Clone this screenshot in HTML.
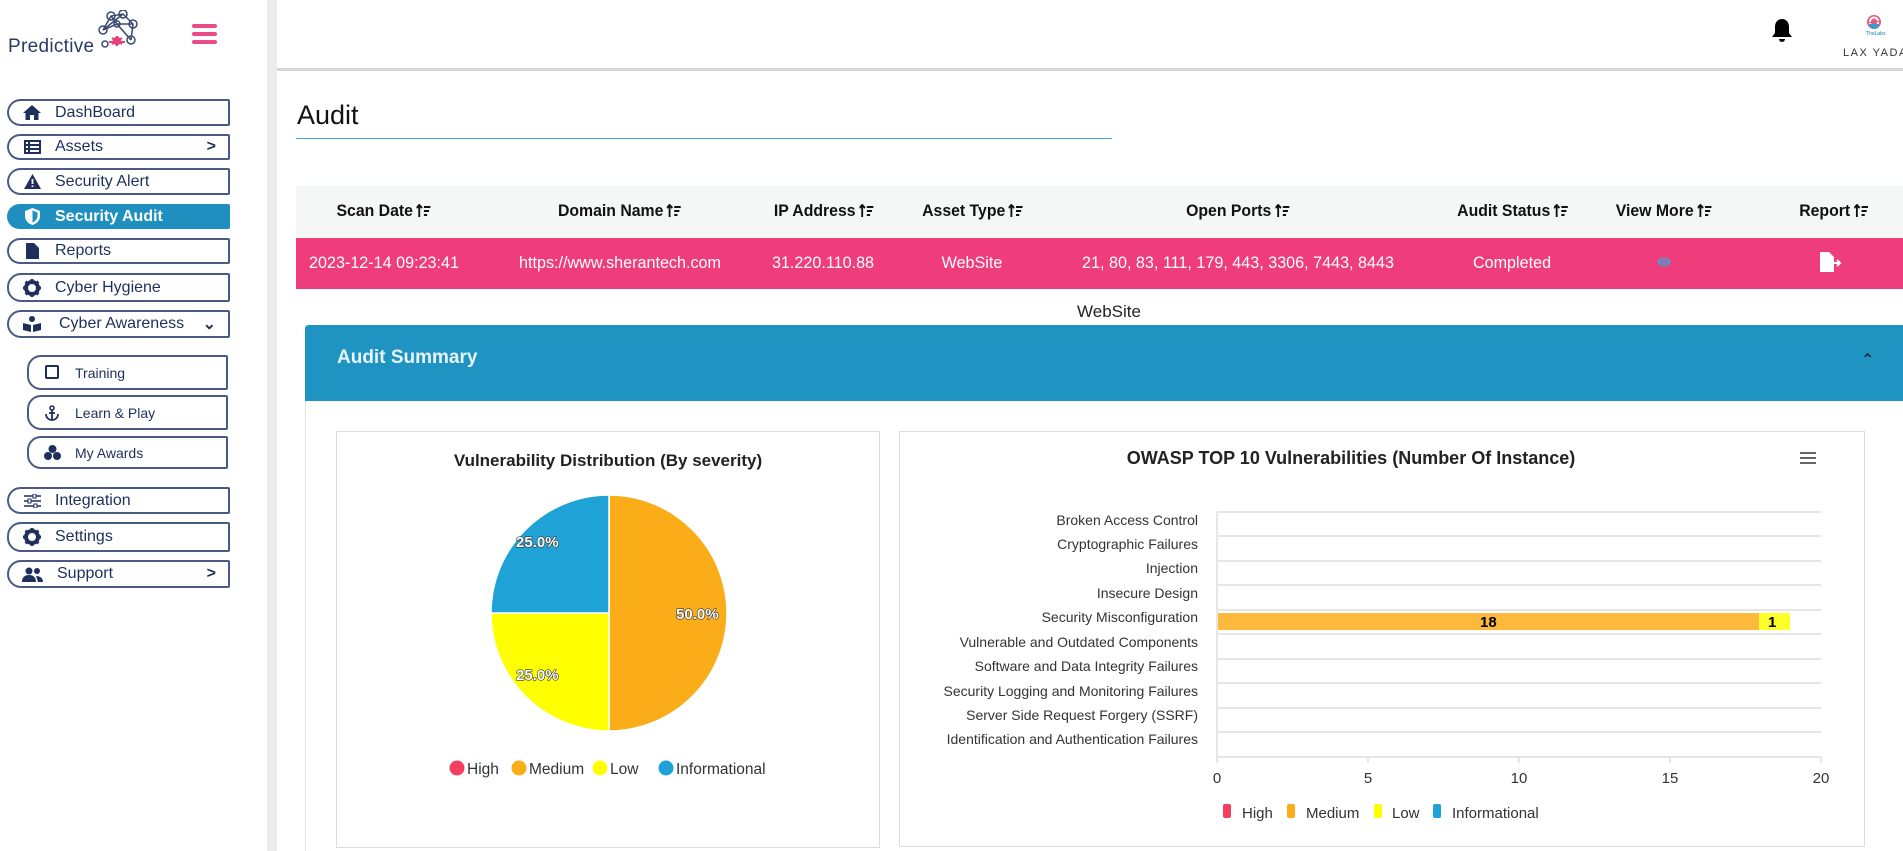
<!DOCTYPE html>
<html><head><meta charset="utf-8">
<style>
*{margin:0;padding:0;box-sizing:border-box}
body{width:1903px;height:851px;overflow:hidden;background:#fff;font-family:"Liberation Sans",Arial,sans-serif;position:relative}
.a{position:absolute}
.nav{position:absolute;left:7px;width:223px;border:2px solid #4a5a85;border-radius:14px 2px 2px 14px;color:#1f2f5c;font-size:16px;display:flex;align-items:center;background:#fff}
.nav .ic{width:46px;display:flex;justify-content:center;align-items:center}
.nav.sub{left:27px;width:201px;font-size:14px}
.nav.act{background:#1e8fbf;border-color:#1e8fbf;color:#fff;font-weight:bold}
.nav .chev{position:absolute;right:12px;font-size:16px;font-weight:bold}
.th{position:absolute;top:201px;font-weight:bold;font-size:17px;color:#111;transform:translateX(-50%) scaleX(0.93);white-space:nowrap;display:flex;align-items:center;gap:4px}
.td{position:absolute;top:253px;font-size:17px;color:#fff;transform:translateX(-50%) scaleX(0.95);white-space:nowrap}
</style></head><body>
<svg width="0" height="0" style="position:absolute"><defs><g id="srt"><path d="M3 1v12M0 4l3-3 3 3" stroke="#111" stroke-width="2" fill="none"/><path d="M8 3h7M8 7h5.5M8 11h3.5" stroke="#111" stroke-width="2"/></g></defs></svg>
<!-- sidebar -->
<div class="a" style="left:267px;top:0;width:10px;height:851px;background:#ececec"></div>
<div class="a" style="left:277px;top:68px;width:1626px;height:3px;background:#d6d6d6"></div>
<div class="a" style="left:8px;top:36px;font-size:19px;color:#2a3a6a;letter-spacing:0.3px">Predictive</div>
<svg class="a" style="left:93px;top:10px" width="46" height="40" viewBox="0 0 46 40" fill="none" stroke="#3a4a70" stroke-width="1.5">
<circle cx="10" cy="20" r="4"/><circle cx="18" cy="6" r="4"/><circle cx="30" cy="4" r="4"/><circle cx="40" cy="14" r="4"/><circle cx="38" cy="30" r="4"/><circle cx="12" cy="34" r="3"/><circle cx="24" cy="14" r="3"/>
<path d="M10 20L18 6L30 4L40 14L38 30M10 20L24 14L40 14M18 6L24 14L38 30M10 20L30 4"/>
<path d="M16 32h16M24 26v10M19 28l10 6M29 28l-10 6" stroke="#e8407a" stroke-width="2"/><circle cx="24" cy="31" r="3.5" fill="#e8407a" stroke="#e8407a"/>
</svg>
<div class="a" style="left:192px;top:24px;width:25px;height:4px;background:#ea4c89;border-radius:2px"></div>
<div class="a" style="left:192px;top:32px;width:25px;height:4px;background:#ea4c89;border-radius:2px"></div>
<div class="a" style="left:192px;top:40px;width:25px;height:4px;background:#ea4c89;border-radius:2px"></div>

<div class="nav" style="top:99px;height:27px"><span class="ic"><svg width="18" height="15" viewBox="0 0 18 15"><path d="M9 0L0 8h2.5v7h4.5v-5h4v5h4.5V8H18z" fill="#1f2f5c"/></svg></span>DashBoard</div>
<div class="nav" style="top:134px;height:26px"><span class="ic"><svg width="17" height="14"><rect x="1" y="1" width="15" height="12" fill="none" stroke="#1f2f5c" stroke-width="2"/><path d="M1 5h15M1 9h15M5 1v12" stroke="#1f2f5c" stroke-width="2"/></svg></span>Assets<span class="chev">&gt;</span></div>
<div class="nav" style="top:168px;height:27px"><span class="ic"><svg width="17" height="15"><path d="M8.5 0L17 15H0z" fill="#1f2f5c"/><path d="M8.5 5v5M8.5 11.5v1.5" stroke="#fff" stroke-width="1.8"/></svg></span>Security Alert</div>
<div class="nav act" style="top:204px;height:25px"><span class="ic"><svg width="15" height="17"><path d="M7.5 0L15 3v5c0 5-4 8-7.5 9C4 16 0 13 0 8V3z" fill="#fff"/><path d="M7.5 2.5v12C10 13.5 12.5 11 12.5 8V4.5z" fill="#1e8fbf"/></svg></span>Security Audit</div>
<div class="nav" style="top:238px;height:26px"><span class="ic"><svg width="13" height="16"><path d="M0 0h8l5 5v11H0z" fill="#1f2f5c"/></svg></span>Reports</div>
<div class="nav" style="top:273px;height:29px"><span class="ic"><svg width="18" height="18" viewBox="0 0 18 18"><circle cx="9" cy="9" r="6" fill="none" stroke="#1f2f5c" stroke-width="4"/><path d="M9 0v4M9 14v4M0 9h4M14 9h4M2.6 2.6l2.8 2.8M12.6 12.6l2.8 2.8M2.6 15.4l2.8-2.8M12.6 5.4l2.8-2.8" stroke="#1f2f5c" stroke-width="3"/></svg></span>Cyber Hygiene</div>
<div class="nav" style="top:310px;height:28px"><span class="ic"><svg width="18" height="16"><circle cx="9" cy="3" r="3" fill="#1f2f5c"/><path d="M0 7l8 2v7L0 14zM18 7l-8 2v7l8-2z" fill="#1f2f5c"/></svg></span><span style="margin-left:4px">Cyber Awareness</span><span class="chev">&#8964;</span></div>
<div class="nav sub" style="top:355px;height:35px"><span class="ic"><svg width="14" height="15"><rect x="1" y="1" width="12" height="12" rx="1" fill="none" stroke="#1f2f5c" stroke-width="2"/></svg></span>Training</div>
<div class="nav sub" style="top:395px;height:35px"><span class="ic"><svg width="16" height="16"><circle cx="8" cy="3" r="2" fill="none" stroke="#1f2f5c" stroke-width="1.6"/><path d="M8 5v10M2 9c0 4 3 6 6 6s6-2 6-6M5 8h6" fill="none" stroke="#1f2f5c" stroke-width="1.8"/></svg></span>Learn &amp; Play</div>
<div class="nav sub" style="top:436px;height:33px"><span class="ic"><svg width="17" height="15"><circle cx="8.5" cy="4" r="4" fill="#1f2f5c"/><circle cx="4" cy="11" r="4" fill="#1f2f5c"/><circle cx="13" cy="11" r="4" fill="#1f2f5c"/></svg></span>My Awards</div>
<div class="nav" style="top:487px;height:27px"><span class="ic"><svg width="17" height="14"><path d="M0 2h17M0 7h17M0 12h17" stroke="#1f2f5c" stroke-width="1.6"/><rect x="9" y="0" width="3" height="4" fill="#fff" stroke="#1f2f5c"/><rect x="4" y="5" width="3" height="4" fill="#fff" stroke="#1f2f5c"/><rect x="10" y="10" width="3" height="4" fill="#fff" stroke="#1f2f5c"/></svg></span>Integration</div>
<div class="nav" style="top:522px;height:30px"><span class="ic"><svg width="18" height="18" viewBox="0 0 18 18"><circle cx="9" cy="9" r="6" fill="none" stroke="#1f2f5c" stroke-width="4"/><path d="M9 0v4M9 14v4M0 9h4M14 9h4M2.6 2.6l2.8 2.8M12.6 12.6l2.8 2.8M2.6 15.4l2.8-2.8M12.6 5.4l2.8-2.8" stroke="#1f2f5c" stroke-width="3"/></svg></span>Settings</div>
<div class="nav" style="top:560px;height:28px"><span class="ic"><svg width="21" height="15"><circle cx="7" cy="4" r="3.5" fill="#1f2f5c"/><circle cx="15" cy="4" r="3" fill="#1f2f5c"/><path d="M0 15c0-5 3-7 7-7s7 2 7 7zM14 9c4 0 7 2 7 6h-5z" fill="#1f2f5c"/></svg></span><span style="margin-left:2px">Support</span><span class="chev">&gt;</span></div>

<!-- top header -->
<svg class="a" style="left:1771px;top:18px" width="22" height="25" viewBox="0 0 22 25"><path d="M11 1c-4 0-7 3-7 8v6l-3 4h20l-3-4V9c0-5-3-8-7-8z" fill="#000"/><path d="M8 21a3 3 0 006 0z" fill="#000"/></svg>
<svg class="a" style="left:1866px;top:14px" width="16" height="16"><circle cx="8" cy="8" r="7" fill="#e85a7a"/><path d="M4 8a4 4 0 018-1M12 8a4 4 0 01-8 1" stroke="#fff" stroke-width="2" fill="none"/><path d="M3 10a5 5 0 0010 0" fill="#2ea0d8"/></svg>
<div class="a" style="left:1866px;top:31px;font-size:5px;color:#1a7ab0">TheLabs</div>
<div class="a" style="left:1843px;top:47px;font-size:11px;color:#333;letter-spacing:1.5px;white-space:nowrap">LAX YADAV</div>

<!-- title -->
<div class="a" style="left:297px;top:100px;font-size:27px;color:#111">Audit</div>
<div class="a" style="left:296px;top:138px;width:816px;height:1px;background:#3aa7d5"></div>

<!-- table -->
<div class="a" style="left:296px;top:186px;width:1607px;height:52px;background:#f5f7f7"></div>
<div class="a" style="left:296px;top:238px;width:1607px;height:51px;background:#ef3d7b"></div>
<div class="th" style="left:384px">Scan Date<svg width="16" height="14"><use href="#srt"/></svg></div>
<div class="th" style="left:620px">Domain Name<svg width="16" height="14"><use href="#srt"/></svg></div>
<div class="th" style="left:824px">IP Address<svg width="16" height="14"><use href="#srt"/></svg></div>
<div class="th" style="left:973px">Asset Type<svg width="16" height="14"><use href="#srt"/></svg></div>
<div class="th" style="left:1238px">Open Ports<svg width="16" height="14"><use href="#srt"/></svg></div>
<div class="th" style="left:1513px">Audit Status<svg width="16" height="14"><use href="#srt"/></svg></div>
<div class="th" style="left:1664px">View More<svg width="16" height="14"><use href="#srt"/></svg></div>
<div class="th" style="left:1834px">Report<svg width="16" height="14"><use href="#srt"/></svg></div>
<div class="td" style="left:384px">2023-12-14 09:23:41</div>
<div class="td" style="left:620px">https://www.sherantech.com</div>
<div class="td" style="left:823px">31.220.110.88</div>
<div class="td" style="left:972px">WebSite</div>
<div class="td" style="left:1238px">21, 80, 83, 111, 179, 443, 3306, 7443, 8443</div>
<div class="td" style="left:1512px">Completed</div>
<svg class="a" style="left:1656px;top:254px" width="16" height="16"><path d="M1 8Q8 -1 15 8Q8 17 1 8z" fill="#3aa3d4"/><circle cx="8" cy="8" r="3" fill="#ef3d7b"/><circle cx="8" cy="8" r="1.5" fill="#3aa3d4"/></svg>
<svg class="a" style="left:1820px;top:252px" width="24" height="20"><path d="M0 0h9l5 5v15H0z" fill="#fff"/><path d="M11 11h9M17 8l3 3-3 3" stroke="#fff" stroke-width="2" fill="none"/></svg>

<div class="a" style="left:1077px;top:302px;font-size:17px;color:#222">WebSite</div>

<!-- audit summary -->
<div class="a" style="left:305px;top:325px;width:1598px;height:526px;border-left:1px solid #e3e3e3;background:#fff"></div>
<div class="a" style="left:305px;top:325px;width:1598px;height:76px;background:#1f93c1;border-radius:4px 0 0 0"></div>
<div class="a" style="left:337px;top:347px;font-size:19px;font-weight:bold;color:#e8f4fa">Audit Summary</div>
<div class="a" style="left:1861px;top:350px;font-size:16px;color:#111">&#8963;</div>

<!-- pie box -->
<div class="a" style="left:336px;top:431px;width:544px;height:417px;border:1px solid #ddd"></div>
<div class="a" style="left:336px;top:451px;width:544px;text-align:center;font-size:17px;font-weight:bold;color:#222">Vulnerability Distribution (By severity)</div>
<svg class="a" style="left:336px;top:431px" width="544" height="417">
<g transform="translate(273,182)">
<path d="M0 0V-118A118 118 0 0 1 0 118z" fill="#fbac19" stroke="#fff" stroke-width="1.5"/>
<path d="M0 0V118A118 118 0 0 1 -118 0z" fill="#ffff00" stroke="#fff" stroke-width="1.5"/>
<path d="M0 0H-118A118 118 0 0 1 0 -118z" fill="#1fa3d6" stroke="#fff" stroke-width="1.5"/>
<g font-family="Liberation Sans" font-weight="bold" font-size="15" fill="#fff" stroke="#333" stroke-width="1.2" style="paint-order:stroke" stroke-linejoin="round">
<text x="-93" y="-66">25.0%</text><text x="-93" y="67">25.0%</text><text x="67" y="6">50.0%</text></g>
</g>
<g font-family="Liberation Sans" font-size="15.5" fill="#333">
<circle cx="121" cy="337" r="7.5" fill="#f4405e"/><text x="131" y="343">High</text>
<circle cx="183" cy="337" r="7.5" fill="#fbac19"/><text x="193" y="343">Medium</text>
<circle cx="264" cy="337" r="7.5" fill="#ffff00"/><text x="274" y="343">Low</text>
<circle cx="330" cy="337" r="7.5" fill="#1fa3d6"/><text x="340" y="343">Informational</text>
</g>
</svg>

<!-- bar box -->
<div class="a" style="left:899px;top:431px;width:966px;height:416px;border:1px solid #ddd"></div>
<div class="a" style="left:899px;top:448px;width:966px;text-align:center;font-size:18px;font-weight:bold;color:#222"><span style="margin-left:-62px">OWASP TOP 10 Vulnerabilities (Number Of Instance)</span></div>
<div class="a" style="left:1800px;top:452px;width:16px;height:2px;background:#666;box-shadow:0 5px 0 #666,0 10px 0 #666"></div>
<svg class="a" style="left:0;top:0" width="1903" height="851">
<g stroke="#e6e6e6" stroke-width="2">
<line x1="1217" y1="512" x2="1821" y2="512"/><line x1="1217" y1="536" x2="1821" y2="536"/><line x1="1217" y1="561" x2="1821" y2="561"/><line x1="1217" y1="585" x2="1821" y2="585"/><line x1="1217" y1="610" x2="1821" y2="610"/><line x1="1217" y1="634" x2="1821" y2="634"/><line x1="1217" y1="659" x2="1821" y2="659"/><line x1="1217" y1="683" x2="1821" y2="683"/><line x1="1217" y1="708" x2="1821" y2="708"/><line x1="1217" y1="732" x2="1821" y2="732"/><line x1="1217" y1="757" x2="1821" y2="757"/>
<line x1="1217" y1="512" x2="1217" y2="763"/><line x1="1368" y1="757" x2="1368" y2="763"/><line x1="1519" y1="757" x2="1519" y2="763"/><line x1="1670" y1="757" x2="1670" y2="763"/><line x1="1821" y1="757" x2="1821" y2="763"/>
</g>
<rect x="1218" y="613" width="541" height="17" fill="#fdb93c"/>
<rect x="1759" y="613" width="31" height="17" fill="#ffff2a"/>
<g font-family="Liberation Sans" font-weight="bold" font-size="15" fill="#000"><text x="1480" y="627">18</text><text x="1768" y="627">1</text></g>
<g font-family="Liberation Sans" font-size="15" fill="#333" text-anchor="middle"><text x="1217" y="783">0</text><text x="1368" y="783">5</text><text x="1519" y="783">10</text><text x="1670" y="783">15</text><text x="1821" y="783">20</text></g>
<g font-family="Liberation Sans" font-size="15" fill="#333">
<rect x="1223" y="804" width="8" height="14" rx="2" fill="#f4405e"/><text x="1242" y="818">High</text>
<rect x="1287" y="804" width="8" height="14" rx="2" fill="#fbac19"/><text x="1306" y="818">Medium</text>
<rect x="1374" y="804" width="8" height="14" rx="2" fill="#ffff00"/><text x="1392" y="818">Low</text>
<rect x="1433" y="804" width="8" height="14" rx="2" fill="#1fa3d6"/><text x="1452" y="818">Informational</text>
</g>
<g font-family="Liberation Sans" font-size="14" fill="#333" text-anchor="end">
<text x="1198" y="525">Broken Access Control</text>
<text x="1198" y="549">Cryptographic Failures</text>
<text x="1198" y="573">Injection</text>
<text x="1198" y="598">Insecure Design</text>
<text x="1198" y="622">Security Misconfiguration</text>
<text x="1198" y="647">Vulnerable and Outdated Components</text>
<text x="1198" y="671">Software and Data Integrity Failures</text>
<text x="1198" y="696">Security Logging and Monitoring Failures</text>
<text x="1198" y="720">Server Side Request Forgery (SSRF)</text>
<text x="1198" y="744">Identification and Authentication Failures</text>
</g>
</svg>
</body></html>
